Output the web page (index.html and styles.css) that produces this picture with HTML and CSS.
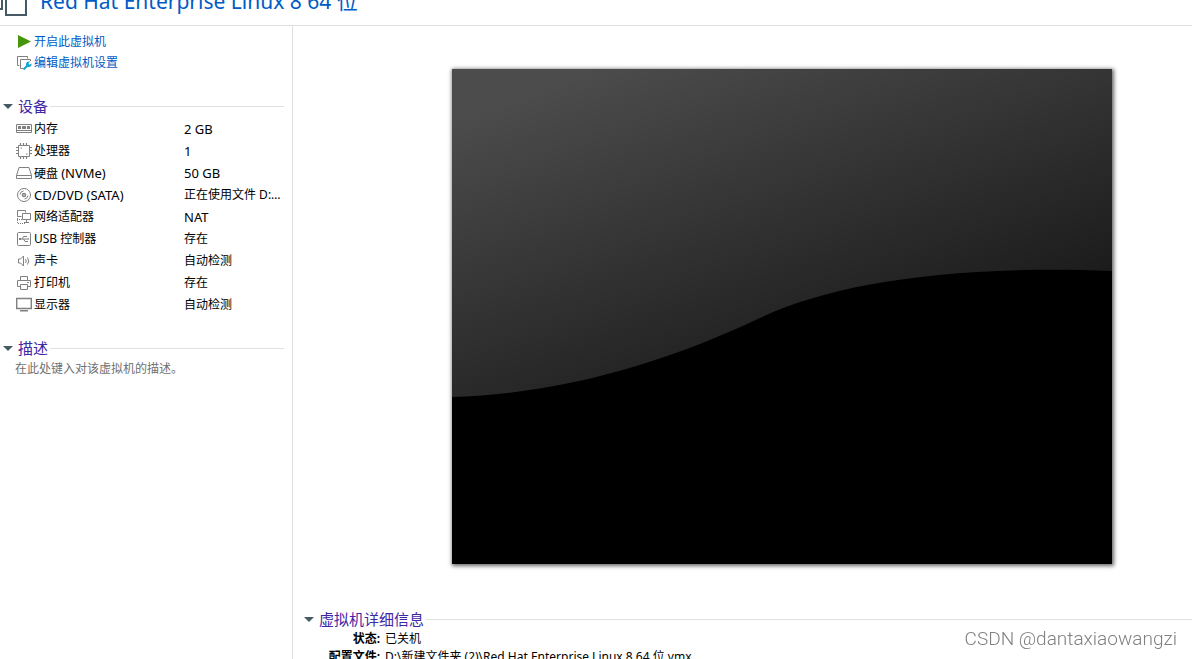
FILE: index.html
```html
<!DOCTYPE html>
<html lang="zh-CN">
<head>
<meta charset="utf-8">
<meta name="viewport" content="width=device-width, initial-scale=1">
<title>Red Hat Enterprise Linux 8 64 位</title>
<link rel="stylesheet" href="styles.css">
</head>
<body>
<header class="titlebar">
  <svg class="title-icon" viewBox="0 0 28 28" aria-hidden="true"><path d="M3 20H-8V0H18V3M2 10v10M6 5h20v21H6z"/></svg>
  <h1 class="title">Red Hat Enterprise Linux 8 64 位</h1>
</header>
<main class="layout">
  <aside class="sidebar">
    <div class="actions">
      <button class="action" type="button">
        <svg class="icon" viewBox="0 0 16 16" aria-hidden="true"><path class="play" d="M2 1l13 6.500L2 14z"/></svg>开启此虚拟机</button>
      <button class="action" type="button">
        <svg class="icon" viewBox="0 0 16 16" aria-hidden="true"><path d="M3.500 10.500h-2v-9h10v2M7 13.500H4.500v-9h10V6"/><path class="wrench" d="M7.500 14.500l4-4"/><path class="wrench-head" d="M14 6.500l-1.500 2.200 1 1L15.500 8.500c.5 2.500-1.200 4-3.700 3.500L10 10.200c-.5-2.500 1.500-4 4-3.700z"/></svg>编辑虚拟机设置</button>
    </div>
    <section class="group">
      <h2 class="heading"><button class="toggle" type="button" aria-expanded="true"><svg class="arrow" viewBox="0 0 10 6" aria-hidden="true"><path d="M0 1h10L5 6z"/></svg>设备</button></h2>
      <table class="devices">
        <tbody>
        <tr><th scope="row"><span class="device"><svg class="icon" viewBox="0 0 16 16" aria-hidden="true"><path d="M.5 11.500v-8h15v8zM.5 9.500h15M2 11.500h12"/><path class="fill" d="M2 5h3v3H2zM6 5h4v3H6zM11 5h3v3h-3z"/></svg>内存</span></th><td class="latin">2 GB</td></tr>
        <tr><th scope="row"><span class="device"><svg class="icon" viewBox="0 0 16 16" aria-hidden="true"><path d="M2.500 2.500h11v11h-11z"/><path stroke-width="1.200" d="M4.500 0v2M7.500 0v2M10.500 0v2M4.500 14v2M7.500 14v2M10.500 14v2M0 4.500h2M0 7.500h2M0 10.500h2M14 4.500h2M14 7.500h2M14 10.500h2M4.500 5h1.500M10 11h1.500"/></svg>处理器</span></th><td class="latin">1</td></tr>
        <tr><th scope="row"><span class="device"><svg class="icon" viewBox="0 0 16 16" aria-hidden="true"><path d="M.5 10.500l2.500-8h10l2.500 8v3H.5zM.5 10.500h15"/></svg><span>硬盘 <span class="latin">(NVMe)</span></span></span></th><td class="latin">50 GB</td></tr>
        <tr><th scope="row"><span class="device latin"><svg class="icon" viewBox="0 0 16 16" aria-hidden="true"><circle cx="8" cy="8" r="6.500"/><circle cx="8" cy="8" r="1.500" stroke-width="1.500"/><path d="M4 7.500A4 4 0 0 1 7.500 4M12 8.500A4 4 0 0 1 8.500 12"/></svg>CD/DVD (SATA)</span></th><td><span class="value">正在使用文件 D:\新建文件夹</span></td></tr>
        <tr><th scope="row"><span class="device"><svg class="icon" viewBox="0 0 16 16" aria-hidden="true"><path d="M5.500 7.500h-4v-6h8v2M6.500 4.500h8v6h-8zM10.500 11v2M8 13.500h5"/><path stroke-dasharray="1 1" d="M1.500 9v6M2 14.500h7M1 10.500h5"/></svg>网络适配器</span></th><td class="latin">NAT</td></tr>
        <tr><th scope="row"><span class="device"><svg class="icon" viewBox="0 0 16 16" aria-hidden="true"><rect x="1.500" y="1.500" width="13" height="13" rx="1"/><path d="M4 8h8M6 8l1.500-2.500H10M7.500 8L9 10.500h2"/><path class="fill" d="M3 7h2v2H3zM9 5h2v1H9zM10 10h2v1h-2zM12 7l1.500 1L12 9z"/></svg>USB 控制器</span></th><td>存在</td></tr>
        <tr><th scope="row"><span class="device"><svg class="icon" viewBox="0 0 16 16" aria-hidden="true"><path d="M2.500 6v4h2l3 3V3l-3 3zM9.500 6q1.500 2 0 4M11.500 4.500q2.500 3.500 0 7"/></svg>声卡</span></th><td>自动检测</td></tr>
        <tr><th scope="row"><span class="device"><svg class="icon" viewBox="0 0 16 16" aria-hidden="true"><path d="M4.500 5.500v-4h7v4M4 11.500H1.500v-6h13v6H12M4.500 9.500h7v5h-7zM11 7.500h2"/></svg>打印机</span></th><td>存在</td></tr>
        <tr><th scope="row"><span class="device"><svg class="icon" viewBox="0 0 16 16" aria-hidden="true"><path stroke-width="1.400" d="M.7 1.500h14.600v10H.7zM4 13.700h8"/></svg>显示器</span></th><td>自动检测</td></tr>
        </tbody>
      </table>
    </section>
    <section class="group">
      <h2 class="heading"><button class="toggle" type="button" aria-expanded="true"><svg class="arrow" viewBox="0 0 10 6" aria-hidden="true"><path d="M0 1h10L5 6z"/></svg>描述</button></h2>
      <textarea class="description" aria-label="描述" placeholder="在此处键入对该虚拟机的描述。" rows="3"></textarea>
    </section>
  </aside>
  <div class="content">
    <div class="stage">
      <svg class="screen" viewBox="0 0 660 495" role="img" aria-label="虚拟机屏幕">
        <defs><linearGradient id="gloss" gradientUnits="userSpaceOnUse" x1="16" y1="44" x2="140" y2="387"><stop offset="0" stop-color="#4c4c4c"/><stop offset="1" stop-color="#1c1c1c"/></linearGradient></defs>
        <path d="M0 0h660v495H0z"/>
        <path fill="url(#gloss)" d="M0 0H660V202C500 196 382 214 308 249C215 293 110 325 0 328z"/>
      </svg>
    </div>
    <section class="details">
      <h2 class="heading"><button class="toggle" type="button" aria-expanded="true"><svg class="arrow" viewBox="0 0 10 6" aria-hidden="true"><path d="M0 1h10L5 6z"/></svg>虚拟机详细信息</button></h2>
      <dl class="facts">
        <dt>状态:</dt><dd>已关机</dd>
        <dt>配置文件:</dt><dd>D:\新建文件夹 (2)\Red Hat Enterprise Linux 8 64 位.vmx</dd>
      </dl>
    </section>
  </div>
</main>
<div class="watermark">CSDN @dantaxiaowangzi</div>
</body>
</html>
```

FILE: styles.css
```css
* { box-sizing: border-box; }
body {
  margin: 0;
  height: 100vh;
  overflow: hidden;
  display: flex;
  flex-direction: column;
  background: #fff;
  color: #000;
  font: 12px/18px "Noto Sans", "Noto Sans CJK SC", sans-serif;
}
button {
  margin: 0;
  padding: 0;
  border: 0;
  background: none;
  font: inherit;
  color: inherit;
  cursor: pointer;
}
.titlebar {
  flex: none;
  display: flex;
  align-items: flex-end;
  gap: 12px;
  height: 26px;
  padding-bottom: 8px;
  overflow: hidden;
  border-bottom: 1px solid #e0e0e0;
}
.title-icon {
  flex: none;
  width: 28px;
  height: 28px;
  fill: none;
  stroke: #455a64;
  stroke-width: 2;
}
.title {
  margin: 0;
  font-size: 21px;
  line-height: 32px;
  font-weight: 400;
  color: #005bc5;
  white-space: nowrap;
}
.layout {
  flex: 1;
  min-height: 0;
  display: grid;
  grid-template-columns: 293px 1fr;
}
.sidebar {
  border-right: 1px solid #e0e0e0;
  padding: 5px 8px 0 0;
}
.actions {
  display: flex;
  flex-direction: column;
  align-items: flex-start;
  padding-left: 16px;
  color: #005bc5;
}
.action, .device {
  display: flex;
  align-items: center;
  gap: 2px;
}
.action { height: 21px; }
.icon {
  flex: none;
  width: 16px;
  height: 16px;
  fill: none;
  stroke: #808080;
}
.icon .play { fill: #46960c; stroke: none; }
.icon .wrench { stroke: #12a5d0; stroke-width: 2; }
.icon .wrench-head { fill: #12a5d0; stroke: none; }
.icon .fill { fill: #808080; stroke: none; }
.group { margin-top: 22px; }
.heading {
  display: flex;
  align-items: center;
  gap: 2px;
  margin: 0;
  font-size: 15px;
  line-height: 22px;
  font-weight: 400;
  color: #3f27a5;
}
.heading::after {
  content: "";
  flex: 1;
  height: 1px;
  background: #e0e0e0;
}
.toggle {
  display: flex;
  align-items: center;
  gap: 5px;
  padding-left: 3px;
}
.arrow { width: 10px; height: 6px; fill: #455a64; }
.devices {
  width: 100%;
  margin: 1px 0 -1px;
  table-layout: fixed;
  border-collapse: collapse;
}
.devices th, .devices td {
  height: 22px;
  padding: 0;
  text-align: left;
  font-weight: 400;
  white-space: nowrap;
}
.devices th { width: 184px; padding-left: 16px; }
.devices .latin { font-size: 13px; }
.value {
  display: block;
  overflow: hidden;
  text-overflow: ellipsis;
}
.description {
  display: block;
  width: 100%;
  padding: 1px 0 0 15px;
  border: 0;
  resize: none;
  background: none;
  font: inherit;
}
.description::placeholder { color: #707070; opacity: 1; }
.content { min-width: 0; }
.stage { padding: 43px 80px 44px 159px; }
.screen {
  display: block;
  width: 100%;
  box-shadow: 1px 1px 4px 1px rgba(0, 0, 0, 0.6);
}
.details { padding-left: 8px; }
.facts {
  display: grid;
  grid-template-columns: 79px 1fr;
  column-gap: 5px;
  margin: 0;
}
.facts dt { text-align: right; font-weight: 700; }
.facts dd { margin: 0; }
.watermark {
  position: fixed;
  right: 15px;
  bottom: 8px;
  font: 300 19px/24px Roboto, sans-serif;
  color: #808080;
}
```
